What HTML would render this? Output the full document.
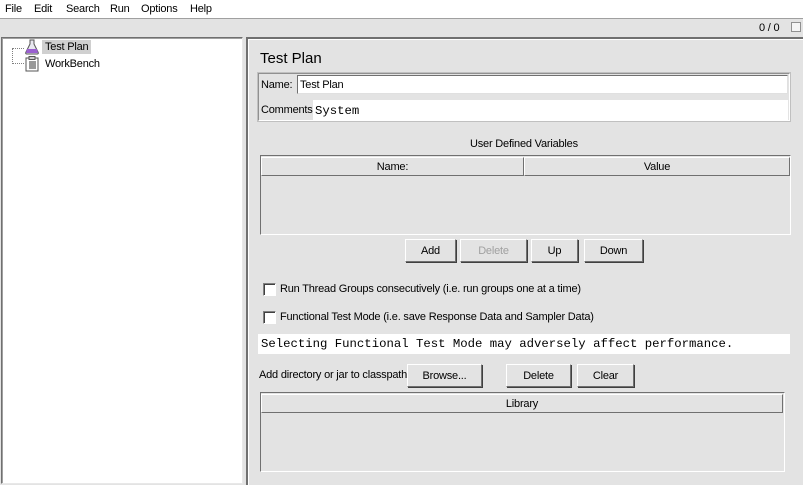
<!DOCTYPE html>
<html><head><style>
*{margin:0;padding:0;box-sizing:border-box}
body{width:803px;height:485px;background:#e3e3e3;font-family:"Liberation Sans",sans-serif;font-size:11px;letter-spacing:-0.2px;color:#000;position:relative;overflow:hidden}
.a{position:absolute;white-space:nowrap}
.btn{position:absolute;background:#e3e3e3;border:1px solid;border-color:#fff #707070 #707070 #fff;box-shadow:1px 1px 0 #404040;text-align:center;font-size:11px;line-height:22px!important}
.cb{position:absolute;width:13px;height:13px;background:#fff;border:1px solid;border-color:#808080 #fff #fff #808080;box-shadow:inset 1px 1px 0 #404040}
.th{position:absolute;background:#e3e3e3;border:1px solid;border-color:#fff #707070 #707070 #fff;text-align:center;line-height:18px}
.m{font-family:'Liberation Mono',monospace;font-size:12.3px;letter-spacing:0}
</style></head><body>
<div class="a" style="left:0;top:0;width:803px;height:19px;background:#fff;border-bottom:1px solid #a0a0a0"></div>
<div class="a" style="left:5px;top:3px">File</div>
<div class="a" style="left:34px;top:3px">Edit</div>
<div class="a" style="left:66px;top:3px">Search</div>
<div class="a" style="left:110px;top:3px">Run</div>
<div class="a" style="left:141px;top:3px">Options</div>
<div class="a" style="left:190px;top:3px">Help</div>
<div class="a" style="left:759px;top:22px">0 / 0</div>
<div class="a" style="left:791px;top:22px;width:10px;height:10px;border:1px solid #909090;background:#f4f4f4"></div>
<div class="a" style="left:1px;top:37px;width:242px;height:447px;background:#fff;border:1px solid;border-color:#707070 #e8e8e8 #e8e8e8 #707070;box-shadow:inset 1px 1px 0 #a0a0a0"></div>
<div class="a" style="left:12px;top:48px;width:12px;height:16px;border-left:1px dotted #808080;border-bottom:1px dotted #808080"></div>
<div class="a" style="left:12px;top:48px;width:12px;border-top:1px dotted #808080"></div>
<svg class="a" style="left:24px;top:39px" width="16" height="16"><path d="M6 1h4v4l4 8q1 2-1 2H3q-2 0-1-2l4-8z" fill="#e8e8f0" stroke="#555"/><path d="M3 10h10l1 4H2z" fill="#9a5fd0"/></svg>
<svg class="a" style="left:24px;top:56px" width="16" height="16"><rect x="2" y="2" width="12" height="13" fill="#fff" stroke="#555"/><rect x="5" y="0.5" width="6" height="3" fill="#ccc" stroke="#555"/><path d="M5 6h7M5 8h7M5 10h7M5 12h7" stroke="#333"/></svg>
<div class="a" style="left:42px;top:40px;padding:1px 3px;background:#d0d0d0">Test Plan</div>
<div class="a" style="left:45px;top:58px">WorkBench</div>
<div class="a" style="left:246px;top:37px;width:557px;height:448px;border-left:2px solid #707070;border-top:2px solid #707070;box-shadow:inset 1px 1px 0 #fff"></div>
<div class="a" style="left:260px;top:50px;font-size:15px;letter-spacing:0">Test Plan</div>
<div class="a" style="left:258px;top:73px;width:532px;height:48px;border:1px solid;border-color:#909090 #fff #fff #909090;outline:1px solid #c0c0c0"></div>
<div class="a" style="left:261px;top:79px">Name:</div>
<div class="a" style="left:297px;top:75px;width:491px;height:19px;background:#fff;border:1px solid;border-color:#707070 #e0e0e0 #e0e0e0 #707070;padding:3px 2px">Test Plan</div>
<div class="a" style="left:261px;top:104px">Comments:</div>
<div class="a m" style="left:313px;top:100px;width:475px;height:20px;background:#fff;padding:4px 2px">System</div>
<div class="a" style="left:470px;top:138px">User Defined Variables</div>
<div class="a" style="left:260px;top:155px;width:531px;height:80px;border:1px solid;border-color:#707070 #fff #fff #707070"></div>
<div class="th" style="left:261px;top:157px;width:263px;height:19px">Name:</div>
<div class="th" style="left:524px;top:157px;width:266px;height:19px">Value</div>
<div class="btn" style="left:405px;top:239px;width:51px;height:23px">Add</div>
<div class="btn" style="left:460px;top:239px;width:67px;height:23px;color:#a0a0a0">Delete</div>
<div class="btn" style="left:531px;top:239px;width:47px;height:23px">Up</div>
<div class="btn" style="left:584px;top:239px;width:59px;height:23px">Down</div>
<div class="cb" style="left:263px;top:283px"></div>
<div class="a" style="left:280px;top:283px">Run Thread Groups consecutively (i.e. run groups one at a time)</div>
<div class="cb" style="left:263px;top:311px"></div>
<div class="a" style="left:280px;top:311px">Functional Test Mode (i.e. save Response Data and Sampler Data)</div>
<div class="a m" style="left:258px;top:334px;width:532px;height:20px;background:#fff;padding:3px 3px">Selecting Functional Test Mode may adversely affect performance.</div>
<div class="a" style="left:259px;top:369px">Add directory or jar to classpath</div>
<div class="btn" style="left:407px;top:364px;width:75px;height:23px">Browse...</div>
<div class="btn" style="left:506px;top:364px;width:65px;height:23px">Delete</div>
<div class="btn" style="left:577px;top:364px;width:57px;height:23px">Clear</div>
<div class="a" style="left:260px;top:392px;width:525px;height:80px;border:1px solid;border-color:#707070 #fff #fff #707070"></div>
<div class="th" style="left:261px;top:394px;width:522px;height:19px">Library</div>
</body></html>
